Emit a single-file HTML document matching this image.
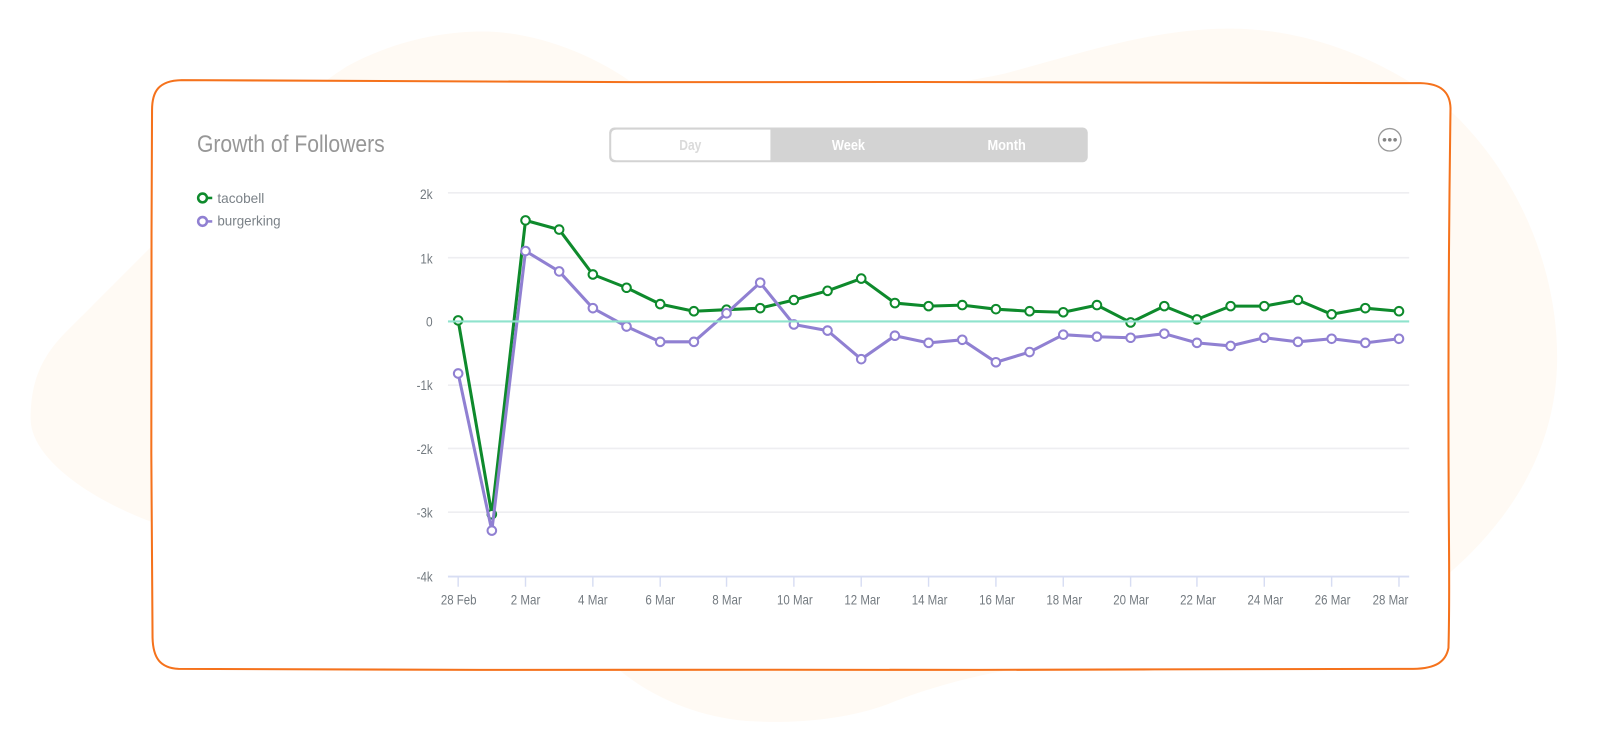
<!DOCTYPE html>
<html lang="en">
<head>
<meta charset="utf-8">
<title>Growth of Followers</title>
<style>
html,body{margin:0;padding:0;background:#fff;width:1600px;height:750px;overflow:hidden}
svg{display:block}
text{font-family:"Liberation Sans",sans-serif}
.ax{font-size:13.500px;fill:#747b81}
.g{fill:#fff;stroke:#0e8a2c;stroke-width:2}
.p{fill:#fff;stroke:#9080d2;stroke-width:2}
</style>
</head>
<body>
<svg width="1600" height="750" viewBox="0 0 1568 735" xmlns="http://www.w3.org/2000/svg">
<path fill="#fffaf4" d="M30 410C30 375 40 350 65 325C100 290 130 260 165 225C220 170 270 110 340 65C390 38 440 30 480 31C530 33 585 55 625 85C720 100 880 95 985 72C1060 52 1130 28 1205 28C1290 28 1370 65 1425 112C1490 175 1526 265 1526 350C1526 440 1480 510 1420 562C1340 620 1180 640 1040 650C980 655 920 670 870 690C830 705 780 709 740 707C690 705 640 685 605 655C500 640 280 550 150 512C90 490 30 450 30 410Z"/>
<path fill="#fff" stroke="#f5721c" stroke-width="2" d="M149 108C149 90 155 79 178 78.500C300 80 450 80.500 620 80.500C800 80.500 1000 80 1180 81C1260 81.500 1330 81 1392 81.500C1412 82 1421 90 1421.500 106C1419.500 250 1419 400 1420 530C1420.300 570 1420.500 600 1419.500 635C1417 648 1408 655 1385 655.500C1250 656.500 1100 655.500 960 656.500C800 656.500 620 656 470 656.500C370 656.500 270 656 175 655.500C157 654.500 150 645 149.500 625C148 500 148 350 148.500 230C148.500 180 149 140 149 108Z"/>

<text x="193" y="149" font-size="24" fill="#979797" textLength="184" lengthAdjust="spacingAndGlyphs">Growth of Followers</text>

<rect x="597" y="125" width="469" height="34" rx="5" fill="#d3d3d3"/>
<path d="M604 127H755V157H604Q599 157 599 152V132Q599 127 604 127Z" fill="#fff"/>
<text x="676.500" y="147" font-size="14.700" font-weight="bold" fill="#dadada" text-anchor="middle" textLength="21.600" lengthAdjust="spacingAndGlyphs">Day</text>
<text x="831.500" y="147" font-size="14.700" font-weight="bold" fill="#fff" text-anchor="middle" textLength="32.500" lengthAdjust="spacingAndGlyphs">Week</text>
<text x="986.500" y="147" font-size="14.700" font-weight="bold" fill="#fff" text-anchor="middle" textLength="37.600" lengthAdjust="spacingAndGlyphs">Month</text>

<circle cx="1362" cy="137" r="11" fill="#fff" stroke="#999" stroke-width="1.300"/>
<circle cx="1356.800" cy="137" r="1.800" fill="#858585"/>
<circle cx="1362" cy="137" r="1.800" fill="#858585"/>
<circle cx="1367.200" cy="137" r="1.800" fill="#858585"/>

<line x1="197" y1="194" x2="208" y2="194" stroke="#0e8a2c" stroke-width="2.500"/>
<circle cx="198.500" cy="194" r="4.300" fill="#fff" stroke="#0e8a2c" stroke-width="2.500"/>
<text x="213" y="199" font-size="13.500" fill="#7b8288" textLength="46" lengthAdjust="spacingAndGlyphs">tacobell</text>
<line x1="197" y1="217" x2="208" y2="217" stroke="#9080d2" stroke-width="2.500"/>
<circle cx="198.500" cy="217" r="4.300" fill="#fff" stroke="#9080d2" stroke-width="2.500"/>
<text x="213" y="221" font-size="13.500" fill="#7b8288" textLength="62" lengthAdjust="spacingAndGlyphs">burgerking</text>

<g stroke="#eeeef1" stroke-width="1.600">
<line x1="439" y1="189" x2="1381" y2="189"/>
<line x1="439" y1="252.500" x2="1381" y2="252.500"/>
<line x1="439" y1="377.500" x2="1381" y2="377.500"/>
<line x1="439" y1="439.500" x2="1381" y2="439.500"/>
<line x1="439" y1="502" x2="1381" y2="502"/>
</g>
<g stroke="#d7ddf3" stroke-width="1.400">
<line x1="439" y1="565" x2="1381" y2="565" stroke-width="1.800"/>
<line x1="449" y1="565" x2="449" y2="575"/><line x1="515" y1="565" x2="515" y2="575"/><line x1="581" y1="565" x2="581" y2="575"/><line x1="647" y1="565" x2="647" y2="575"/><line x1="712" y1="565" x2="712" y2="575"/><line x1="778" y1="565" x2="778" y2="575"/><line x1="844" y1="565" x2="844" y2="575"/><line x1="910" y1="565" x2="910" y2="575"/><line x1="976" y1="565" x2="976" y2="575"/><line x1="1042" y1="565" x2="1042" y2="575"/><line x1="1108" y1="565" x2="1108" y2="575"/><line x1="1173" y1="565" x2="1173" y2="575"/><line x1="1239" y1="565" x2="1239" y2="575"/><line x1="1305" y1="565" x2="1305" y2="575"/><line x1="1371" y1="565" x2="1371" y2="575"/>
</g>

<g class="ax">
<text x="411.600" y="195" textLength="12.400" lengthAdjust="spacingAndGlyphs">2k</text>
<text x="412" y="258" textLength="12" lengthAdjust="spacingAndGlyphs">1k</text>
<text x="417.500" y="320" textLength="6.500" lengthAdjust="spacingAndGlyphs">0</text>
<text x="408.300" y="382" textLength="15.700" lengthAdjust="spacingAndGlyphs">-1k</text>
<text x="408.300" y="445" textLength="15.700" lengthAdjust="spacingAndGlyphs">-2k</text>
<text x="408.300" y="507" textLength="15.700" lengthAdjust="spacingAndGlyphs">-3k</text>
<text x="408.300" y="570" textLength="15.700" lengthAdjust="spacingAndGlyphs">-4k</text>
</g>
<g class="ax" text-anchor="middle">
<text x="449.500" y="592.500" textLength="35" lengthAdjust="spacingAndGlyphs">28 Feb</text>
<text x="515" y="592.500" textLength="29" lengthAdjust="spacingAndGlyphs">2 Mar</text>
<text x="581" y="592.500" textLength="29" lengthAdjust="spacingAndGlyphs">4 Mar</text>
<text x="647" y="592.500" textLength="29" lengthAdjust="spacingAndGlyphs">6 Mar</text>
<text x="712.500" y="592.500" textLength="29" lengthAdjust="spacingAndGlyphs">8 Mar</text>
<text x="779" y="592.500" textLength="35" lengthAdjust="spacingAndGlyphs">10 Mar</text>
<text x="845" y="592.500" textLength="35" lengthAdjust="spacingAndGlyphs">12 Mar</text>
<text x="911" y="592.500" textLength="35" lengthAdjust="spacingAndGlyphs">14 Mar</text>
<text x="977" y="592.500" textLength="35" lengthAdjust="spacingAndGlyphs">16 Mar</text>
<text x="1043" y="592.500" textLength="35" lengthAdjust="spacingAndGlyphs">18 Mar</text>
<text x="1108.500" y="592.500" textLength="35" lengthAdjust="spacingAndGlyphs">20 Mar</text>
<text x="1174" y="592.500" textLength="35" lengthAdjust="spacingAndGlyphs">22 Mar</text>
<text x="1240" y="592.500" textLength="35" lengthAdjust="spacingAndGlyphs">24 Mar</text>
<text x="1306" y="592.500" textLength="35" lengthAdjust="spacingAndGlyphs">26 Mar</text>
<text x="1362.700" y="592.500" textLength="35" lengthAdjust="spacingAndGlyphs">28 Mar</text>
</g>

<polyline fill="none" stroke="#0e8a2c" stroke-width="3" stroke-linejoin="round" points="449,314 482,504 515,216 548,225 581,269 614,282 647,298 680,305 712,303.500 745,302 778,294 811,285 844,273 877,297 910,300 943,299 976,303 1009,305 1042,306 1075,299 1108,316 1141,300 1173,313 1206,300 1239,300 1272,294 1305,308 1338,302 1371,305"/>
<g class="g">
<circle cx="449" cy="314" r="4.200"/><circle cx="482" cy="504" r="4.200"/><circle cx="515" cy="216" r="4.200"/><circle cx="548" cy="225" r="4.200"/><circle cx="581" cy="269" r="4.200"/><circle cx="614" cy="282" r="4.200"/><circle cx="647" cy="298" r="4.200"/><circle cx="680" cy="305" r="4.200"/><circle cx="712" cy="303.500" r="4.200"/><circle cx="745" cy="302" r="4.200"/><circle cx="778" cy="294" r="4.200"/><circle cx="811" cy="285" r="4.200"/><circle cx="844" cy="273" r="4.200"/><circle cx="877" cy="297" r="4.200"/><circle cx="910" cy="300" r="4.200"/><circle cx="943" cy="299" r="4.200"/><circle cx="976" cy="303" r="4.200"/><circle cx="1009" cy="305" r="4.200"/><circle cx="1042" cy="306" r="4.200"/><circle cx="1075" cy="299" r="4.200"/><circle cx="1108" cy="316" r="4.200"/><circle cx="1141" cy="300" r="4.200"/><circle cx="1173" cy="313" r="4.200"/><circle cx="1206" cy="300" r="4.200"/><circle cx="1239" cy="300" r="4.200"/><circle cx="1272" cy="294" r="4.200"/><circle cx="1305" cy="308" r="4.200"/><circle cx="1338" cy="302" r="4.200"/><circle cx="1371" cy="305" r="4.200"/>
</g>

<polyline fill="none" stroke="#9080d2" stroke-width="3" stroke-linejoin="round" points="449,366 482,520 515,246 548,266 581,302 614,320 647,335 680,335 712,307 745,277 778,318 811,324 844,352 877,329 910,336 943,333 976,355 1009,345 1042,328 1075,330 1108,331 1141,327 1173,336 1206,339 1239,331 1272,335 1305,332 1338,336 1371,332"/>
<g class="p">
<circle cx="449" cy="366" r="4.200"/><circle cx="482" cy="520" r="4.200"/><circle cx="515" cy="246" r="4.200"/><circle cx="548" cy="266" r="4.200"/><circle cx="581" cy="302" r="4.200"/><circle cx="614" cy="320" r="4.200"/><circle cx="647" cy="335" r="4.200"/><circle cx="680" cy="335" r="4.200"/><circle cx="712" cy="307" r="4.200"/><circle cx="745" cy="277" r="4.200"/><circle cx="778" cy="318" r="4.200"/><circle cx="811" cy="324" r="4.200"/><circle cx="844" cy="352" r="4.200"/><circle cx="877" cy="329" r="4.200"/><circle cx="910" cy="336" r="4.200"/><circle cx="943" cy="333" r="4.200"/><circle cx="976" cy="355" r="4.200"/><circle cx="1009" cy="345" r="4.200"/><circle cx="1042" cy="328" r="4.200"/><circle cx="1075" cy="330" r="4.200"/><circle cx="1108" cy="331" r="4.200"/><circle cx="1141" cy="327" r="4.200"/><circle cx="1173" cy="336" r="4.200"/><circle cx="1206" cy="339" r="4.200"/><circle cx="1239" cy="331" r="4.200"/><circle cx="1272" cy="335" r="4.200"/><circle cx="1305" cy="332" r="4.200"/><circle cx="1338" cy="336" r="4.200"/><circle cx="1371" cy="332" r="4.200"/>
</g>

<line x1="439" y1="315" x2="1381" y2="315" stroke="#8fe3cd" stroke-width="2"/>
</svg>
</body>
</html>
